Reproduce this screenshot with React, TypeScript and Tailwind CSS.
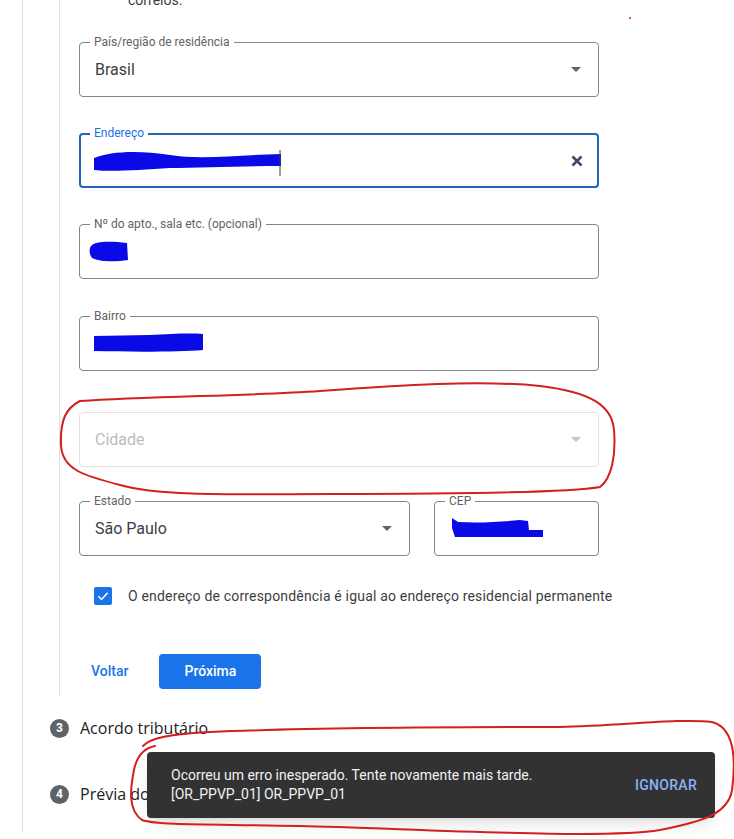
import type { ReactNode } from 'react';

function Arrow({ light }: { light?: boolean }) {
  return (
    <svg width="10" height="5" viewBox="0 0 10 5" className="shrink-0">
      <path d="M0 0 L5 5 L10 0 Z" fill={light ? '#c4c7c5' : '#5f6368'} />
    </svg>
  );
}

function Field({
  label,
  children,
  focused,
  className = '',
}: {
  label?: string;
  children?: ReactNode;
  focused?: boolean;
  className?: string;
}) {
  return (
    <div
      className={`relative flex h-[55px] items-center rounded-[4px] ${
        focused ? 'border-2 border-[#2366b8] pl-[14px] pr-[14px]' : 'border border-[#80868b] pl-[15px] pr-[17px]'
      } ${className}`}
    >
      {label && (
        <span
          className={`absolute bg-white px-[4px] text-[12px] leading-[16px] ${
            focused ? 'left-[9px] -top-[10px] text-[#1a73e8]' : 'left-[10px] -top-[9px] text-[#5f6368]'
          }`}
        >
          {label}
        </span>
      )}
      {children}
    </div>
  );
}

export default function App() {
  return (
    <div className="relative h-[839px] w-[734px] overflow-hidden bg-white text-[#202124] [font-family:Roboto,sans-serif]">
      <div className="ml-[22px] h-[832px] border-l border-[#dadce0]">
        <div className="ml-[36px] flow-root h-[696px] border-l border-[#e0e0e0] pl-[19px]">
          <p className="-mt-[10px] h-[20px] pl-[49px] text-[14px] leading-[20px] text-[#3c4043]">
            correios.
          </p>

          <Field label="País/região de residência" className="mt-[32px] w-[520px]">
            <span className="flex-1 text-[16px] text-[#3c4043]">Brasil</span>
            <Arrow />
          </Field>

          <Field label="Endereço" focused className="mt-[36px] w-[520px]">
            <span className="flex-1 text-[16px] text-[#3c4043]">&nbsp;</span>
            <svg width="12" height="12" viewBox="0 0 12 12">
              <path d="M1.5 1.5 L10.5 10.5 M10.5 1.5 L1.5 10.5" stroke="#3b4a68" strokeWidth="2.6" />
            </svg>
          </Field>

          <Field label="Nº do apto., sala etc. (opcional)" className="mt-[36px] w-[520px]" />

          <Field label="Bairro" className="mt-[37px] w-[520px]" />

          <div className="mt-[41px] flex h-[55px] w-[520px] items-center rounded-[4px] border border-[#e3e3e3] pl-[15px] pr-[17px]">
            <span className="flex-1 text-[16px] text-[#bdbdbd]">Cidade</span>
            <Arrow light />
          </div>

          <div className="mt-[34px] flex w-[520px] gap-[24px]">
            <Field label="Estado" className="w-[331px]">
              <span className="flex-1 text-[16px] text-[#3c4043]">São Paulo</span>
              <Arrow />
            </Field>
            <Field label="CEP" className="w-[165px]" />
          </div>

          <div className="mt-[30px] ml-[15px] flex h-[20px] items-center gap-[16px]">
            <span className="flex h-[18px] w-[18px] items-center justify-center rounded-[2px] bg-[#1a73e8]">
              <svg width="14" height="14" viewBox="0 0 24 24">
                <path d="M4 12.5 L9.5 18 L20 6.5" fill="none" stroke="#fff" strokeWidth="2.6" />
              </svg>
            </span>
            <span className="text-[14px] leading-[20px] tracking-[0.18px] text-[#3c4043]">
              O endereço de correspondência é igual ao endereço residencial permanente
            </span>
          </div>

          <div className="mt-[48px] flex items-center gap-[19px]">
            <button className="h-[35px] px-[12px] text-[14px] font-medium text-[#1a73e8]">Voltar</button>
            <button className="h-[35px] w-[102px] rounded-[4px] bg-[#1a73e8] text-[14px] font-medium text-white">
              Próxima
            </button>
          </div>
        </div>

        <div className="ml-[27px] mt-[20px] flex h-[24px] items-center gap-[11px]">
          <span className="flex h-[19px] w-[19px] items-center justify-center rounded-full bg-[#5f6368] text-[12px] font-bold text-white">
            3
          </span>
          <span className="text-[16px] text-[#202124] [font-family:'Open_Sans',sans-serif]">Acordo tributário</span>
        </div>
        <div className="ml-[27px] mt-[42px] flex h-[24px] items-center gap-[11px]">
          <span className="flex h-[19px] w-[19px] items-center justify-center rounded-full bg-[#5f6368] text-[12px] font-bold text-white">
            4
          </span>
          <span className="text-[16px] text-[#202124] [font-family:'Open_Sans',sans-serif]">Prévia do pedido</span>
        </div>
      </div>

      {/* snackbar */}
      <div className="absolute left-[147px] top-[752px] flex h-[66px] w-[568px] items-center justify-between rounded-[4px] bg-[#323232] pl-[24px] pr-[18px] shadow-lg">
        <div className="text-[14px] leading-[19px] text-[#f1f1f1]">
          <div>Ocorreu um erro inesperado. Tente novamente mais tarde.</div>
          <div>[OR_PPVP_01] OR_PPVP_01</div>
        </div>
        <button className="text-[14px] font-medium tracking-[0.3px] text-[#8ab4f8]">IGNORAR</button>
      </div>

      {/* hand-drawn marks on the screenshot */}
      <svg className="pointer-events-none absolute inset-0" width="734" height="839" viewBox="0 0 734 839">
        <g fill="#0a0ae6">
          <path d="M94 158 C110 151 140 150 170 155 C200 160 240 155 281 154 L281 166 C240 166 200 168 170 168 C140 170 110 172 94 170 Z" />
          <path d="M91 246 C95 241 110 241 127 243 L128 260 C115 262 100 262 92 258 C89 254 89 249 91 246 Z" />
          <path d="M94 336 L150 335 C170 334 190 333 203 334 L203 350 C180 352 130 352 94 351 Z" />
          <path d="M452 518 L458 522 C480 523 500 522 520 520 L528 521 L529 530 L543 530 L543 537 L455 537 L452 528 Z" />
        </g>
        <path d="M280 150 L280 176" stroke="#3c4043" strokeWidth="1" />
        <g fill="none" stroke="#d21f1f" strokeWidth="2" strokeLinecap="round">
          <path d="M80 401 C150 396 250 396 320 391 C400 385 480 380 540 386 C590 392 612 405 614 430 C616 455 612 478 600 487 C560 494 400 494 330 494 C250 494 160 497 120 485 C85 476 62 470 61 445 C60 420 66 408 80 401" />
          <path d="M143 746 C150 738 170 734 210 732 C300 728 450 727 560 727 C620 726 680 718 712 722 C735 728 736 760 732 790 C728 815 700 822 660 830 C600 840 400 828 300 826 C220 824 160 826 142 820 C128 810 130 790 134 770 C137 755 145 748 155 746" />
        </g>
        <circle cx="630" cy="18" r="1" fill="#d21f1f" />
      </svg>
    </div>
  );
}
